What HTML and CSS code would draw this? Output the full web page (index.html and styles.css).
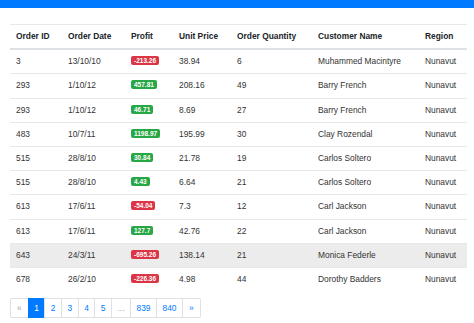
FILE: index.html
```html
<!DOCTYPE html>
<html lang="en">
<head>
    <meta charset="UTF-8">
    <title>Orders</title>
    <link rel="stylesheet" href="styles.css">
</head>
<body>
  <div class="top-bar"></div>
  <div class="wrapper">
    <table class="orders">
      <colgroup>
        <col class="c-id"><col class="c-date"><col class="c-profit"><col class="c-price">
        <col class="c-qty"><col class="c-name"><col class="c-region">
      </colgroup>
      <thead>
        <tr>
          <th>Order ID</th>
          <th>Order Date</th>
          <th>Profit</th>
          <th>Unit Price</th>
          <th>Order Quantity</th>
          <th>Customer Name</th>
          <th>Region</th>
        </tr>
      </thead>
      <tbody>
        <tr><td>3</td><td>13/10/10</td><td><span class="badge neg">-213.26</span></td><td>38.94</td><td>6</td><td>Muhammed Macintyre</td><td>Nunavut</td></tr>
        <tr><td>293</td><td>1/10/12</td><td><span class="badge pos">457.81</span></td><td>208.16</td><td>49</td><td>Barry French</td><td>Nunavut</td></tr>
        <tr><td>293</td><td>1/10/12</td><td><span class="badge pos">46.71</span></td><td>8.69</td><td>27</td><td>Barry French</td><td>Nunavut</td></tr>
        <tr><td>483</td><td>10/7/11</td><td><span class="badge pos">1198.97</span></td><td>195.99</td><td>30</td><td>Clay Rozendal</td><td>Nunavut</td></tr>
        <tr><td>515</td><td>28/8/10</td><td><span class="badge pos">30.84</span></td><td>21.78</td><td>19</td><td>Carlos Soltero</td><td>Nunavut</td></tr>
        <tr><td>515</td><td>28/8/10</td><td><span class="badge pos">4.43</span></td><td>6.64</td><td>21</td><td>Carlos Soltero</td><td>Nunavut</td></tr>
        <tr><td>613</td><td>17/6/11</td><td><span class="badge neg">-54.04</span></td><td>7.3</td><td>12</td><td>Carl Jackson</td><td>Nunavut</td></tr>
        <tr><td>613</td><td>17/6/11</td><td><span class="badge pos">127.7</span></td><td>42.76</td><td>22</td><td>Carl Jackson</td><td>Nunavut</td></tr>
        <tr class="hover"><td>643</td><td>24/3/11</td><td><span class="badge neg">-695.26</span></td><td>138.14</td><td>21</td><td>Monica Federle</td><td>Nunavut</td></tr>
        <tr><td>678</td><td>26/2/10</td><td><span class="badge neg">-226.36</span></td><td>4.98</td><td>44</td><td>Dorothy Badders</td><td>Nunavut</td></tr>
      </tbody>
    </table>
    <ul class="pagination">
      <li class="page muted">&laquo;</li>
      <li class="page active">1</li>
      <li class="page">2</li>
      <li class="page">3</li>
      <li class="page">4</li>
      <li class="page">5</li>
      <li class="page muted">...</li>
      <li class="page">839</li>
      <li class="page">840</li>
      <li class="page">&raquo;</li>
    </ul>
  </div>
</body>
</html>
```

FILE: styles.css
```css
* {
  font-family: "Liberation Sans", Arial, Helvetica, sans-serif;
  box-sizing: border-box;
}

body {
  margin: 0;
  background-color: #fff;
  color: #212529;
}

.top-bar {
  height: 8px;
  background-color: #007bff;
}

.wrapper {
  padding: 16px 7px 0 10px;
}

.orders {
  width: 457px;
  border-collapse: collapse;
  font-size: 8.4px;
  table-layout: fixed;
}

.c-id { width: 52px; }
.c-date { width: 63px; }
.c-profit { width: 48px; }
.c-price { width: 58px; }
.c-qty { width: 81px; }
.c-name { width: 107px; }
.c-region { width: 48px; }

.orders th,
.orders td {
  text-align: left;
  padding: 6px 0 6px 6px;
  line-height: 11.2px;
  border-top: 1px solid #e6e8eb;
  white-space: nowrap;
}

.orders th {
  font-weight: bold;
  border-bottom: 2px solid #dee2e6;
}

.orders td {
  color: #333;
}

.orders tr.hover td {
  background-color: #ececec;
}

.badge {
  display: inline-block;
  padding: 1px 3px;
  font-size: 6.5px;
  font-weight: bold;
  line-height: 7px;
  color: #fff;
  border-radius: 2px;
  vertical-align: 1px;
}

.badge.neg {
  background-color: #dc3545;
}

.badge.pos {
  background-color: #28a745;
}

.pagination {
  display: flex;
  list-style: none;
  margin: 7px 0 0 0;
  padding: 0;
}

.page {
  font-size: 8.4px;
  line-height: 18px;
  padding: 0 5.5px;
  color: #007bff;
  border: 1px solid #dee2e6;
  margin-left: -1px;
  text-align: center;
}

.page:first-child {
  margin-left: 0;
  padding: 0 6px;
  border-radius: 2px 0 0 2px;
}

.page:last-child {
  padding: 0 6px;
  border-radius: 0 2px 2px 0;
}

.page.active {
  background-color: #007bff;
  border-color: #007bff;
  color: #fff;
}

.page.muted {
  color: #9aa4ae;
}
```
